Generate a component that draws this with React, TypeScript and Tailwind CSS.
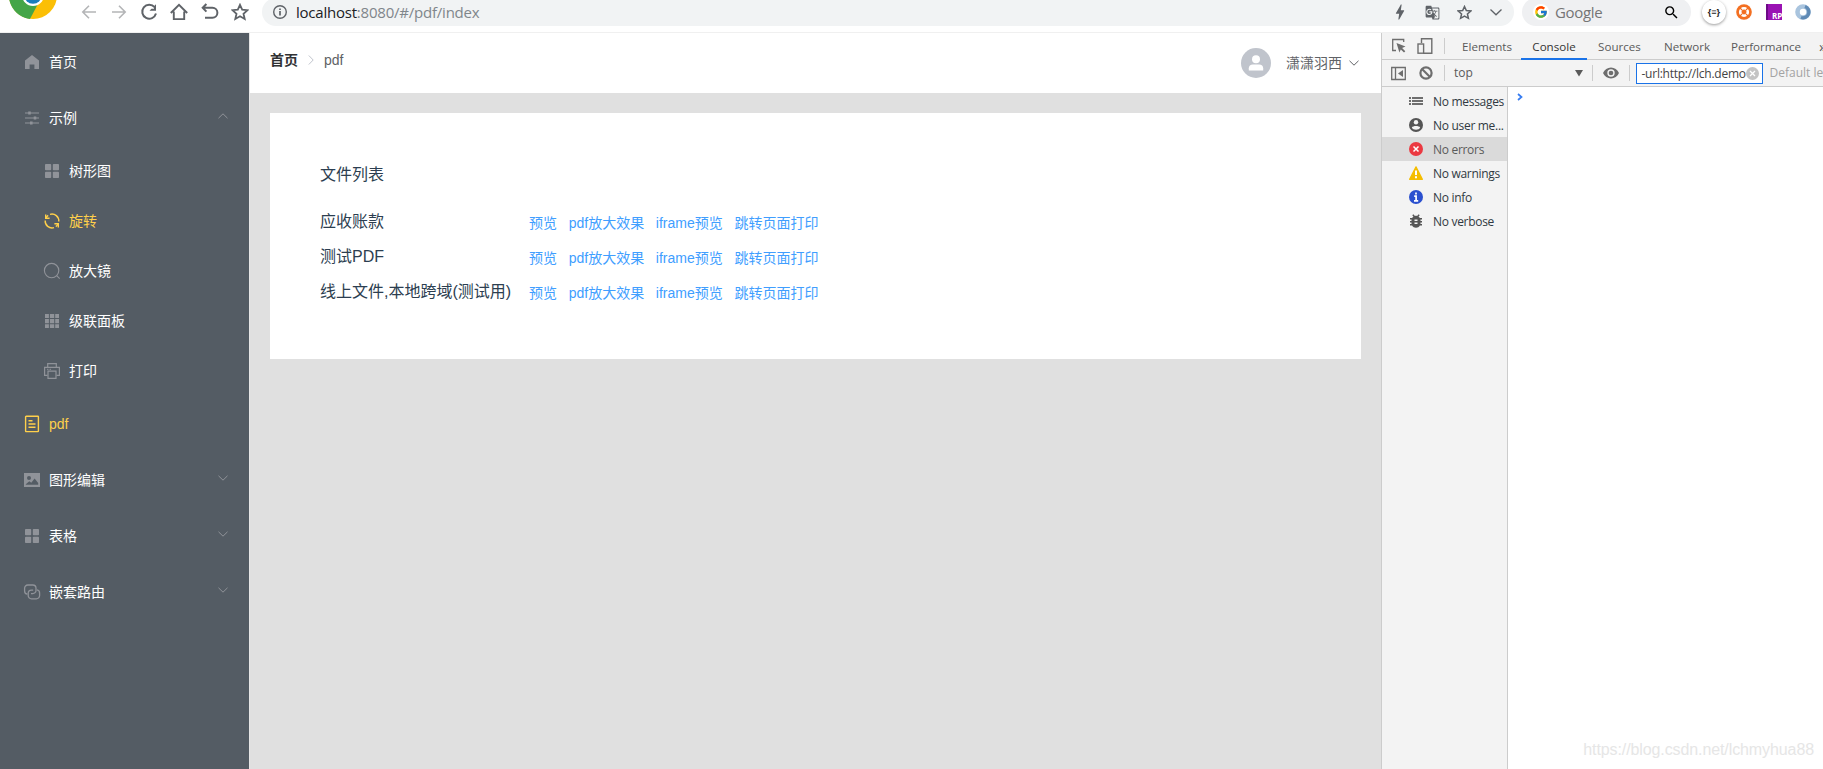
import type { ReactNode } from "react";
import clsx from "clsx";

// icons
import { MdBolt, MdBugReport, MdGTranslate, MdSearch } from "react-icons/md";
import { FcGoogle } from "react-icons/fc";

type IconProps = { className?: string };

const Svg = ({
  size = 18,
  box = 18,
  fill = false,
  width = 1.2,
  className,
  children,
}: {
  size?: number;
  box?: number;
  fill?: boolean;
  width?: number;
  className?: string;
  children: ReactNode;
}) => (
  <svg
    width={size}
    height={size}
    viewBox={`0 0 ${box} ${box}`}
    fill={fill ? "currentColor" : "none"}
    stroke={fill ? "none" : "currentColor"}
    strokeWidth={width}
    className={clsx("shrink-0", className)}
  >
    {children}
  </svg>
);

const Chevron = ({ className }: IconProps) => (
  <Svg size={12} box={12} width={1} className={className}>
    <path d="M1.5 3.8 6 8.2l4.5-4.4" />
  </Svg>
);

const StarIcon = ({ size = 18, width = 1.8 }: { size?: number; width?: number }) => (
  <Svg size={size} width={width}>
    <path d="m9 1.8 2.2 4.9 5.3.5-4 3.6 1.2 5.2L9 13.3 4.3 16l1.2-5.2-4-3.6 5.3-.5z" />
  </Svg>
);

const HomeMenuIcon = () => (
  <Svg fill>
    <path d="M9 2 2 7.6V16h4.6v-4.6h4.8V16H16V7.6z" />
  </Svg>
);

const OperationIcon = () => (
  <Svg>
    <path d="M2 4h14M2 9h14M2 14h14" />
    <path d="M6.5 2.6v2.8M12 7.6v2.8M8.3 12.6v2.8" strokeWidth={2.6} />
  </Svg>
);

const MenuGridIcon = () => (
  <Svg fill>
    <rect x="2" y="2" width="6.2" height="6.2" rx=".8" />
    <rect x="9.8" y="2" width="6.2" height="6.2" rx=".8" />
    <rect x="2" y="9.8" width="6.2" height="6.2" rx=".8" />
    <rect x="9.8" y="9.8" width="6.2" height="6.2" rx=".8" />
  </Svg>
);

const RefreshIcon = () => (
  <Svg width={1.4}>
    <path d="M2.200 8.500a6.900 6.900 0 0 0 8.800 7.200M15.800 9.500A6.900 6.900 0 0 0 7 2.300" />
    <path d="M2.700 2.500v3.800h3.900M15.300 15.500v-3.800h-3.900" />
    <path d="M3 6a7 7 0 0 1 2.200-2.600M15 12a7 7 0 0 1-2.200 2.600" />
  </Svg>
);

const ZoomMenuIcon = () => (
  <Svg width={1.1}>
    <circle cx="8.6" cy="8.6" r="7.2" />
    <path d="m13.7 13.7 3 3" />
  </Svg>
);

const NineGridIcon = () => (
  <Svg fill>
    <path d="M2 2h3.9v3.9H2zM6.9 2h4.3v3.9H6.9zM12.2 2H16v3.9h-3.8zM2 6.9h3.9v4.3H2zM6.9 6.9h4.3v4.3H6.9zM12.2 6.9H16v4.3h-3.8zM2 12.2h3.9V16H2zM6.9 12.2h4.3V16H6.9zM12.2 12.2H16V16h-3.8z" />
  </Svg>
);

const PrinterIcon = () => (
  <Svg>
    <path d="M4.7 5.2V1.6h8.6v3.6M4.5 13.4H1.6V5.4h14.8v8h-2.9" />
    <path d="M5 9.2h8v7.2H5zM4.2 7.4h1.2M6.6 7.4h1.2" />
  </Svg>
);

const TicketsIcon = () => (
  <Svg width={1.4}>
    <rect x="2.6" y="1.2" width="12.8" height="15.4" rx=".6" />
    <path d="M5.5 5.8h4M5.5 9h7M5.5 12.3h7" />
  </Svg>
);

const PictureIcon = () => (
  <Svg fill>
    <path
      fillRule="evenodd"
      d="M1 2h16v14H1zM4 7a2 2 0 1 0 4 0 2 2 0 0 0-4 0M2.8 13.8h12.4V12l-3.6-4.4-3.3 4.2-2-1.5-3.5 3z"
    />
  </Svg>
);

const LinkIcon = () => (
  <Svg width={1.3}>
    <path d="M4.400 11.200A3.200 3.200 0 0 1 1.600 8V5.200A3.200 3.200 0 0 1 4.800 2h5a3.200 3.200 0 0 1 3.200 3.200v2.200a3.200 3.200 0 0 1-3.200 3.200H8" />
    <path d="M14 6.900a3 3 0 0 1 2.600 3v2.700a3.200 3.200 0 0 1-3.200 3.200H8.400a3.200 3.200 0 0 1-3.200-3.200v-2.200a3.200 3.200 0 0 1 3.200-3.200h1.800" />
  </Svg>
);

type MenuEntry = {
  label: string;
  icon: ReactNode;
  sub?: boolean;
  active?: boolean;
  arrow?: "up" | "down";
};

const menu: MenuEntry[] = [
  { label: "首页", icon: <HomeMenuIcon /> },
  { label: "示例", icon: <OperationIcon />, arrow: "up" },
  { label: "树形图", icon: <MenuGridIcon />, sub: true },
  { label: "旋转", icon: <RefreshIcon />, sub: true, active: true },
  { label: "放大镜", icon: <ZoomMenuIcon />, sub: true },
  { label: "级联面板", icon: <NineGridIcon />, sub: true },
  { label: "打印", icon: <PrinterIcon />, sub: true },
  { label: "pdf", icon: <TicketsIcon />, active: true },
  { label: "图形编辑", icon: <PictureIcon />, arrow: "down" },
  { label: "表格", icon: <MenuGridIcon />, arrow: "down" },
  { label: "嵌套路由", icon: <LinkIcon />, arrow: "down" },
];

const files = ["应收账款", "测试PDF", "线上文件,本地跨域(测试用)"];
const actions = ["预览", "pdf放大效果", "iframe预览", "跳转页面打印"];

const ChromeLogo = () => (
  <svg width="48" height="48" viewBox="0 0 48 48" className="-mt-[29px] shrink-0">
    <circle cx="24" cy="24" r="24" fill="#fbbf06" />
    <path d="M24 24 3.2 12A24 24 0 0 0 21 48l10-19z" fill="#44a548" />
    <path d="M24 24 3.2 12a24 24 0 0 1 41.6 0z" fill="#e33b2e" />
    <circle cx="24" cy="24" r="11" fill="#fff" />
    <circle cx="24" cy="24" r="8.800" fill="#1a7dbd" />
  </svg>
);

const BrowserBar = () => (
  <div className="h-[33px] flex items-start overflow-hidden bg-white border-b border-[#f0f0f0] font-['Open_Sans','Noto_Sans',sans-serif]">
    <div className="w-[74px] pl-[9px] shrink-0">
      <ChromeLogo />
    </div>
    <div className="w-[188px] h-6 flex items-center shrink-0 text-[#5f6368]">
      <div className="w-[30px] flex justify-center text-[#b4b5b7]">
        <Svg size={16} box={16} width={1.6}>
          <path d="M15 8H2M8 1.7 1.8 8 8 14.3" />
        </Svg>
      </div>
      <div className="w-[30px] flex justify-center text-[#b4b5b7]">
        <Svg size={16} box={16} width={1.6}>
          <path d="M1 8h13M8 1.7 14.2 8 8 14.3" />
        </Svg>
      </div>
      <div className="w-[30px] flex justify-center">
        <Svg width={2}>
          <path d="M14.6 4.2A7 7 0 1 0 16 10.6" />
          <path d="M16 1.2v6.6H9.5l2-2h2.5V3.2z" fill="currentColor" stroke="none" />
        </Svg>
      </div>
      <div className="w-[30px] flex justify-center">
        <Svg width={1.9}>
          <path d="M.8 10 9 1.8l8.200 8.200M3.800 8.500v7.600h10.400V8.500" />
        </Svg>
      </div>
      <div className="w-[31px] flex justify-center">
        <Svg width={2}>
          <path d="M2 4.800h9.400a5 5 0 0 1 0 10H4M5.400 1 1.700 4.800l3.700 3.800" />
        </Svg>
      </div>
      <div className="w-[29px] flex justify-center">
        <StarIcon />
      </div>
    </div>
    <div className="w-[1252px] h-7 -mt-0.5 pl-[11px] pr-0.5 flex items-center shrink-0 rounded-full bg-[#f1f3f4] text-[#5f6368]">
      <Svg size={14} box={14} width={1.4}>
        <circle cx="7" cy="7" r="6.3" />
        <path d="M7 6v4.5M7 3.4v1.6" strokeWidth={1.7} />
      </Svg>
      <span className="ml-[9px] mb-px text-[15px] leading-5 tracking-[-0.22px] whitespace-nowrap text-[#80868b]">
        <span className="text-[#202124]">localhost</span>:8080/#/pdf/index
      </span>
      <div className="ml-auto w-8 flex justify-center">
        <MdBolt size={20} />
      </div>
      <div className="w-8 flex justify-center">
        <MdGTranslate size={15} />
      </div>
      <div className="w-8 flex justify-center">
        <StarIcon size={15} width={1.8} />
      </div>
      <div className="w-8 flex justify-center">
        <Svg size={14} box={14} width={1.3}>
          <path d="M1.500 4.500 7 9.800l5.500-5.300" />
        </Svg>
      </div>
    </div>
    <div className="w-[169px] h-7 -mt-0.5 ml-2 pl-[11px] pr-[11px] flex items-center shrink-0 rounded-full bg-[#eff0f2]">
      <span className="size-4 flex items-center justify-center rounded-full bg-white">
        <FcGoogle size={14} />
      </span>
      <span className="ml-1.5 mb-px text-[15px] leading-5 tracking-[-0.35px] text-[#757575]">Google</span>
      <MdSearch size={17} className="ml-auto text-black" />
    </div>
    <div className="h-6 ml-[11px] flex items-center shrink-0">
      <span className="size-6 flex items-center justify-center rounded-full bg-white shadow-[0_1px_3px_#999] text-[9px] font-bold text-[#222]">
        {"{≡}"}
      </span>
      <svg width="16" height="16" viewBox="0 0 16 16" className="ml-[10px]">
        <circle cx="8" cy="8" r="7.800" fill="#f36f21" />
        <circle cx="8" cy="8" r="3.800" fill="none" stroke="#fff" strokeWidth="2.600" />
        <path d="m3.500 3.500 2.600 2.600M12.500 3.500 9.900 6.100M3.500 12.500l2.600-2.600M12.500 12.500 9.900 9.900" stroke="#f36f21" strokeWidth="1.300" />
      </svg>
      <span className="size-4 ml-[14px] flex items-end justify-end bg-[#9a12b3] border-l-2 border-[#6d0a86] text-[8px] leading-[9px] tracking-tight font-bold text-white">
        RP
      </span>
      <svg width="16" height="16" viewBox="0 0 16 16" className="ml-[13px]">
        <circle cx="8" cy="8" r="5.500" fill="none" stroke="#a9c4de" strokeWidth="4.600" />
        <path d="M10 2.500A5.800 5.800 0 0 1 6 13.500" fill="none" stroke="#5f8ab5" strokeWidth="3.400" />
      </svg>
    </div>
  </div>
);

const Sidebar = () => (
  <aside className="w-[249px] pt-px shrink-0 bg-[#545c64]">
    {menu.map((item) => (
      <div
        key={item.label}
        className={clsx(
          "flex items-center pr-5 text-sm",
          item.sub ? "h-[50px] pl-10" : "h-14 pl-5",
          item.active ? "text-[#ffd04b]" : "text-white"
        )}
      >
        <span
          className={clsx(
            "w-6 mr-[5px] flex justify-center",
            item.active ? "text-[#ffd04b]" : "text-[#909399]"
          )}
        >
          {item.icon}
        </span>
        <span>{item.label}</span>
        {item.arrow && (
          <Chevron
            className={clsx(
              "ml-auto mb-1 text-[#909399]",
              item.arrow === "up" && "rotate-180"
            )}
          />
        )}
      </div>
    ))}
  </aside>
);

const PageHeader = () => (
  <header className="h-[60px] pl-5 pr-[21px] flex items-center bg-white text-sm text-[#606266]">
    <div className="mb-[6px] flex items-center">
      <span className="font-bold text-[#303133]">首页</span>
      <Chevron className="mx-[7px] -rotate-90 text-[#c0c4cc]" />
      <span>pdf</span>
    </div>
    <div className="ml-auto flex items-center">
      <span className="size-[30px] flex items-center justify-center rounded-full bg-[#c0c4cc] text-white">
        <Svg size={16} box={16} fill>
          <circle cx="8" cy="4.2" r="4" />
          <path d="M.8 15.4v-2.2c0-2.4 1.6-3.8 4-3.8h6.4c2.4 0 4 1.4 4 3.8v2.2z" />
        </Svg>
      </span>
      <span className="ml-[15px]">潇潇羽西</span>
      <Chevron className="ml-1.5" />
    </div>
  </header>
);

const FileList = () => (
  <div className="h-[246px] mx-5 mt-5 px-[50px] pt-[51px] bg-white text-base text-[#2c3e50]">
    <div className="h-[22px] leading-[22px]">文件列表</div>
    <div className="mt-[18px]">
      {files.map((file) => (
        <div key={file} className="h-[35px] flex items-center">
          <span className="w-[209px] whitespace-nowrap">{file}</span>
          <div className="pt-0.5 flex gap-[11.7px] text-sm text-[#409eff]">
            {actions.map((action) => (
              <a key={action}>{action}</a>
            ))}
          </div>
        </div>
      ))}
    </div>
  </div>
);

const Divider = ({ className }: IconProps) => (
  <span className={clsx("w-px h-4 shrink-0 bg-[#ccc]", className)} />
);

const filters = [
  {
    label: "No messages",
    icon: (
      <Svg size={14} box={14} fill className="text-[#6e6e6e]">
        <path d="M0 3h2v2H0zM3 3h11v2H3zM0 6h2v2H0zM3 6h11v2H3zM0 9h2v2H0zM3 9h11v2H3z" />
      </Svg>
    ),
  },
  {
    label: "No user me...",
    icon: (
      <Svg size={14} box={14} fill className="text-[#555]">
        <circle cx="7" cy="7" r="7" />
        <circle cx="7" cy="4.3" r="2.2" fill="#f3f3f3" />
        <path d="M2.8 9.6C4 7.6 10 7.6 11.2 9.6 10 12.6 4 12.6 2.8 9.6" fill="#f3f3f3" />
      </Svg>
    ),
  },
  {
    label: "No errors",
    selected: true,
    icon: (
      <Svg size={14} box={14} className="text-white" width={1.5}>
        <circle cx="7" cy="7" r="7" fill="#eb3941" stroke="none" />
        <path d="m4.5 4.5 5 5m0-5-5 5" />
      </Svg>
    ),
  },
  {
    label: "No warnings",
    icon: (
      <Svg size={14} box={14} className="text-white" width={2}>
        <path d="M7 .8 13.400 13.300H.6z" fill="#f4bd00" stroke="#f4bd00" strokeWidth={1.2} strokeLinejoin="round" />
        <path d="M7 4.500v4.400M7 10.200v2" />
      </Svg>
    ),
  },
  {
    label: "No info",
    icon: (
      <Svg size={14} box={14} className="text-white" width={2}>
        <circle cx="7" cy="7" r="7" fill="#2b50cf" stroke="none" />
        <path d="M7 2.6v2M5.2 6.2h1.9v4M5 10.8h4.2" strokeWidth={1.7} />
      </Svg>
    ),
  },
  {
    label: "No verbose",
    icon: <MdBugReport size={18} className="-mx-0.5 shrink-0 text-[#555]" />,
  },
];

const DevTools = () => (
  <section className="w-[442px] flex flex-col shrink-0 overflow-hidden border-l border-[#ccc] bg-[#f3f3f3] text-[12px] text-[#5a5a5a] whitespace-nowrap font-['Open_Sans','Noto_Sans',sans-serif]">
    <div className="h-[27px] pl-[9px] flex items-center shrink-0 border-b border-[#ccc]">
      <Svg size={16} box={16} width={1.3} className="text-[#6e6e6e]">
        <path d="M5 12.500H1.700v-11h11V4" />
        <path d="m5.500 5 9 3.600-3.400 1.500 3.200 3.200-1.300 1.300-3.200-3.200-1.400 3.200z" fill="currentColor" stroke="none" />
      </Svg>
      <Svg size={16} box={16} width={1.4} className="ml-[10px] text-[#6e6e6e]">
        <path d="M4.5 5V.8h10.3v14.4H6" />
        <rect x="1" y="6" width="5.6" height="9.2" />
      </Svg>
      <Divider className="ml-[11px]" />
      <div className="h-[27px] ml-2 -mb-px flex shrink-0 text-[11.6px] leading-[28px] text-center">
        <span className="w-[68px]">Elements</span>
        <span className="w-[66px] border-b-2 border-[#1a73e8] text-[#333]">Console</span>
        <span className="w-[65px]">Sources</span>
        <span className="w-[70px]">Network</span>
        <span className="w-[88px]">Performance</span>
      </div>
      <span className="ml-[9px] text-[15px]">»</span>
    </div>
    <div className="h-[27px] pl-[9px] flex items-center shrink-0 border-b border-[#ccc]">
      <Svg size={15} box={15} width={1.3} className="text-[#6e6e6e]">
        <path d="M.7 1.5h13.6v12H.7zM4.5 1.5v12" />
        <path d="M12 4v7L7 7.5z" fill="currentColor" stroke="none" />
      </Svg>
      <Svg size={14} box={14} width={2.2} className="ml-[13px] text-[#6e6e6e]">
        <circle cx="7" cy="7" r="5.6" />
        <path d="m3 3 8 8" />
      </Svg>
      <Divider className="ml-[11px]" />
      <span className="w-[121px] ml-[9px] mr-[0.5px] shrink-0">top</span>
      <Svg size={8} box={8} fill className="ml-[-1px] text-[#5a5a5a]">
        <path d="M0 1h8L4 7.500z" />
      </Svg>
      <Divider className="ml-[9px]" />
      <Svg size={16} box={16} fill className="ml-[10px] text-[#6e6e6e]">
        <path fillRule="evenodd" d="M8 2.5C4.500 2.500 1.500 4.700 0 8c1.500 3.300 4.500 5.500 8 5.500s6.500-2.200 8-5.500c-1.500-3.300-4.500-5.500-8-5.500M4.300 8a3.700 3.700 0 1 0 7.400 0 3.700 3.700 0 0 0-7.400 0" />
        <circle cx="8" cy="8" r="2.3" />
      </Svg>
      <Divider className="ml-[10px]" />
      <div className="w-[127px] h-[21px] ml-[6px] pl-[5px] pr-[3px] flex items-center justify-between shrink-0 border border-[#1a73e8] bg-white text-[#444]">
        <span className="pt-0.5 tracking-[-0.25px]">-url:http://lch.demo</span>
        <Svg size={13} box={13} className="text-white" width={1.3}>
          <circle cx="6.5" cy="6.5" r="6.5" fill="#c4c4c4" stroke="none" />
          <path d="m4 4 5 5m0-5-5 5" />
        </Svg>
      </div>
      <span className="ml-[7px] text-[#a3a3a3]">Default levels</span>
    </div>
    <div className="flex-1 flex">
      <div className="w-[126px] pt-0.5 shrink-0 border-r border-[#ccc] text-[#303942]">
        {filters.map((filter) => (
          <div
            key={filter.label}
            className={clsx(
              "h-6 pl-[27px] flex items-center",
              filter.selected && "bg-[#dadada] text-[#5a5a5a]"
            )}
          >
            {filter.icon}
            <span className="ml-[10px] pt-0.5 tracking-[-0.3px]">{filter.label}</span>
          </div>
        ))}
      </div>
      <div className="flex-1 pt-[6px] pl-[8px] bg-white">
        <Svg size={8} box={8} width={1.7} className="text-[#367cf1]">
          <path d="m2 1 3.500 3L2 7" />
        </Svg>
      </div>
    </div>
  </section>
);

const App: React.FC = () => {
  return (
    <div className="relative w-[1823px] h-[769px] flex flex-col overflow-hidden bg-white font-['Liberation_Sans','Noto_Sans_CJK_SC',sans-serif]">
      <BrowserBar />
      <div className="flex-1 flex">
        <Sidebar />
        <main className="flex-1 border-l border-[#e6e6e6] bg-[#e0e0e0]">
          <PageHeader />
          <FileList />
        </main>
        <DevTools />
      </div>
      <span className="absolute right-[9px] bottom-[9px] text-base leading-5 tracking-[-0.1px] text-[#e6e6e6]">
        https://blog.csdn.net/lchmyhua88
      </span>
    </div>
  );
};

export default App;
